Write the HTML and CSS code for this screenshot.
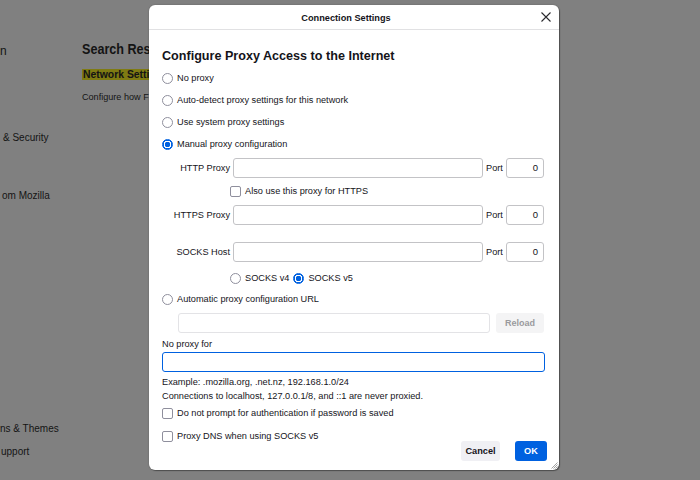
FILE: index.html
```html
<!DOCTYPE html>
<html>
<head>
<meta charset="utf-8">
<link rel="stylesheet" href="styles.css">
</head>
<body>
<div class="page">
  <div class="sidebar">
    <div class="side-item s1">n</div>
    <div class="side-item s2">&amp; Security</div>
    <div class="side-item s3">om Mozilla</div>
    <div class="side-spacer"></div>
    <div class="side-item s4">ns &amp; Themes</div>
    <div class="side-item s5">upport</div>
  </div>
  <div class="main">
    <div class="main-title">Search Res</div>
    <div class="main-sub"><span class="hl">Network Setti</span></div>
    <div class="main-desc">Configure how F</div>
  </div>
</div>

<div class="dialog">
  <div class="dlg-head">
    <span class="dlg-title">Connection Settings</span>
    <svg class="close" width="10" height="10" viewBox="0 0 10 10"><path d="M0.5 0.5 L9.5 9.5 M9.5 0.5 L0.5 9.5" stroke="#2a2a2e" stroke-width="1.1" fill="none"/></svg>
  </div>
  <div class="dlg-body">
    <h1 class="heading">Configure Proxy Access to the Internet</h1>
    <div class="opt o1"><span class="radio"></span><span>No proxy</span></div>
    <div class="opt"><span class="radio"></span><span>Auto-detect proxy settings for this network</span></div>
    <div class="opt"><span class="radio"></span><span>Use system proxy settings</span></div>
    <div class="opt"><span class="radio on"></span><span>Manual proxy configuration</span></div>

    <div class="prow p1">
      <label class="lbl">HTTP Proxy</label>
      <div class="field host"></div>
      <label class="plbl">Port</label>
      <div class="field port">0</div>
    </div>
    <div class="sub-row c-https"><span class="box"></span><span>Also use this proxy for HTTPS</span></div>
    <div class="prow p2">
      <label class="lbl">HTTPS Proxy</label>
      <div class="field host"></div>
      <label class="plbl">Port</label>
      <div class="field port">0</div>
    </div>
    <div class="prow p3">
      <label class="lbl">SOCKS Host</label>
      <div class="field host"></div>
      <label class="plbl">Port</label>
      <div class="field port">0</div>
    </div>
    <div class="sub-row socks">
      <span class="radio"></span><span class="v4">SOCKS v4</span>
      <span class="radio on"></span><span>SOCKS v5</span>
    </div>

    <div class="opt auto"><span class="radio"></span><span>Automatic proxy configuration URL</span></div>
    <div class="url-row">
      <div class="field disabled"></div>
      <div class="reload">Reload</div>
    </div>
    <div class="np-label">No proxy for</div>
    <div class="field focused"></div>
    <div class="note n1">Example: .mozilla.org, .net.nz, 192.168.1.0/24</div>
    <div class="note">Connections to localhost, 127.0.0.1/8, and ::1 are never proxied.</div>
    <div class="opt chk c1"><span class="box"></span><span>Do not prompt for authentication if password is saved</span></div>
    <div class="opt chk c2"><span class="box"></span><span>Proxy DNS when using SOCKS v5</span></div>
  </div>
  <div class="dlg-foot">
    <div class="btn cancel">Cancel</div>
    <div class="btn ok">OK</div>
  </div>
  <svg class="grip" width="7" height="7" viewBox="0 0 7 7"><path d="M6.5 0.5 L0.5 6.5 M6.5 2.5 L2.5 6.5 M6.5 4.5 L4.5 6.5" stroke="#8a8a8a" stroke-width="0.8" fill="none"/></svg>
</div>
</body>
</html>
```

FILE: styles.css
```css
html, body {
  margin: 0;
  padding: 0;
  width: 700px;
  height: 480px;
  overflow: hidden;
  background: #808080;
  font-family: "Liberation Sans", Arial, sans-serif;
  color: #15141a;
}

.page {
  display: flex;
  height: 480px;
}

.sidebar {
  width: 82px;
  display: flex;
  flex-direction: column;
  font-size: 10px;
  color: #141414;
}
.side-item { height: 14px; line-height: 14px; white-space: nowrap; }
.s1 { margin-top: 44px; font-size: 12px; }
.s2 { margin-top: 73px; padding-left: 3px; }
.s3 { margin-top: 44px; padding-left: 2px; }
.side-spacer { flex: 1; }
.s4 { padding-left: 0; }
.s5 { margin-top: 9px; margin-bottom: 21px; padding-left: 1px; }

.main {
  width: 67px;
  display: flex;
  flex-direction: column;
  color: #141414;
  white-space: nowrap;
}
.main-title { margin-top: 41px; font-size: 12.6px; font-weight: bold; height: 18px; line-height: 18px; transform-origin: left; transform: scaleY(1.12); }
.main-sub { margin-top: 9px; font-size: 10.4px; font-weight: bold; height: 14px; line-height: 14px; }
.hl { background: #7f7b12; padding: 0 1px; }
.main-desc { margin-top: 9px; font-size: 9.1px; height: 12px; line-height: 12px; }

.dialog {
  position: absolute;
  left: 149px;
  top: 5px;
  width: 410px;
  height: 465px;
  background: #fff;
  border-radius: 6px;
  box-shadow: 1px 1px 1px rgba(0,0,0,0.35), 0 0 2px rgba(0,0,0,0.25);
  display: flex;
  flex-direction: column;
  font-size: 9.2px;
}

.dlg-head {
  flex: none;
  height: 24px;
  padding-right: 16px;
  border-bottom: 1px solid #e1e1e3;
  display: flex;
  align-items: center;
  justify-content: center;
  position: relative;
}
.dlg-title { font-weight: bold; font-size: 9.2px; margin-top: 1px; }
.close { position: absolute; right: 8px; top: 7px; }

.dlg-body {
  flex: 1;
  min-height: 0;
  padding: 16px 15px 0 13px;
  display: flex;
  flex-direction: column;
}
.dlg-body > * { flex-shrink: 0; }

.heading {
  margin: 0;
  font-size: 12.6px;
  font-weight: bold;
  height: 20px;
  line-height: 20px;
  white-space: nowrap;
}

.opt {
  height: 22px;
  display: flex;
  align-items: center;
  white-space: nowrap;
}
.opt.o1 { margin-top: 1px; }

.radio {
  box-sizing: border-box;
  width: 11px;
  height: 11px;
  border: 1px solid #8f8f9d;
  border-radius: 50%;
  margin-right: 4px;
  flex: none;
  background: #fff;
}
.radio.on {
  border: 1px solid #0061e0;
  background: radial-gradient(circle, #0061e0 0 2.6px, #fff 3px 3.6px, #0061e0 4px);
}
.box {
  box-sizing: border-box;
  width: 11px;
  height: 11px;
  border: 1px solid #8f8f9d;
  border-radius: 2px;
  margin-right: 4px;
  flex: none;
}

.prow {
  display: flex;
  align-items: center;
  gap: 3px;
  height: 20px;
  white-space: nowrap;
}
.prow.p1 { margin-top: 3px; }
.prow.p2 { margin-top: 4px; }
.prow.p3 { margin-top: 17px; }
.lbl { width: 68px; text-align: right; }
.plbl { width: 17px; }
.field {
  box-sizing: border-box;
  height: 20px;
  border: 1px solid #c3c3c6;
  border-radius: 3px;
  background: #fff;
}
.field.host { width: 250px; }
.field.port { width: 38px; text-align: right; padding-right: 5px; line-height: 18px; font-size: 9.5px; }

.sub-row {
  display: flex;
  align-items: center;
  height: 20px;
  margin-left: 68px;
  white-space: nowrap;
}
.sub-row.c-https { margin-top: 3px; }
.sub-row.socks { margin-top: 6px; }
.socks .v4 { margin-right: 4px; }

.opt.auto { margin-top: 0; height: 22px; }

.url-row {
  display: flex;
  margin-top: 3px;
  margin-left: 16px;
  gap: 6px;
}
.url-row .field { width: 312px; }
.field.disabled { border-color: #e3e3e6; }
.reload {
  width: 48px;
  height: 20px;
  border-radius: 3px;
  background: #f4f4f5;
  color: #9a9a9e;
  font-weight: bold;
  font-size: 9px;
  display: flex;
  align-items: center;
  justify-content: center;
}

.np-label { margin-top: 4px; height: 14px; line-height: 14px; }
.field.focused {
  margin-top: 1px;
  width: 383px;
  border: 1.5px solid #0061e0;
}
.note { height: 14px; line-height: 14px; white-space: nowrap; }
.note.n1 { margin-top: 3px; }
.opt.chk { height: 20px; }
.opt.c1 { margin-top: 0; }
.opt.c2 { margin-top: 3px; }

.dlg-foot {
  flex: none;
  height: 20px;
  padding: 0 12px 9px 0;
  display: flex;
  justify-content: flex-end;
  gap: 15px;
}
.btn {
  height: 20px;
  border-radius: 3px;
  font-weight: bold;
  font-size: 9.2px;
  display: flex;
  align-items: center;
  justify-content: center;
}
.btn.cancel { width: 39px; background: #f0f0f4; color: #15141a; }
.btn.ok { width: 32px; background: #0061e0; color: #fff; }

.grip { position: absolute; right: 1px; bottom: 1px; }
```
